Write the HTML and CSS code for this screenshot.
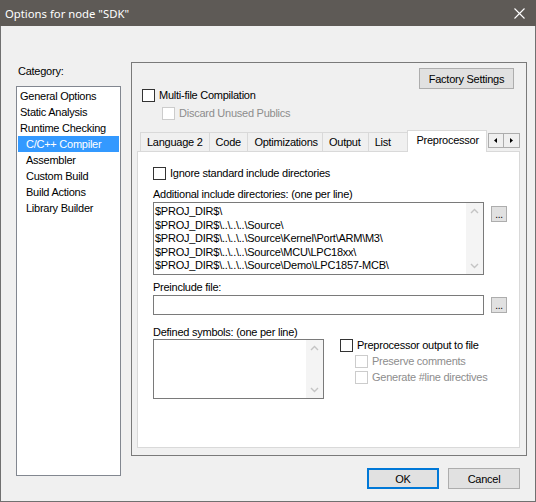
FILE: index.html
```html
<!DOCTYPE html>
<html lang="en">
<head>
    <meta charset="UTF-8">
    <title>Options for node "SDK"</title>
    <link rel="stylesheet" href="styles.css">
</head>
<body>
    <div class="window">
        <div class="titlebar">
            <span class="title">Options for node "SDK"</span>
            <svg class="close" width="11" height="11" viewBox="0 0 11 11"><path d="M0.5 0.5 L10.5 10.5 M10.5 0.5 L0.5 10.5" stroke="#fff" stroke-width="1.1" fill="none"/></svg>
        </div>
        <div class="client">
            <div class="left">
                <div class="cat-label">Category:</div>
                <ul class="catlist">
                    <li>General Options</li>
                    <li>Static Analysis</li>
                    <li>Runtime Checking</li>
                    <li class="sub selected">C/C++ Compiler</li>
                    <li class="sub">Assembler</li>
                    <li class="sub">Custom Build</li>
                    <li class="sub">Build Actions</li>
                    <li class="sub">Library Builder</li>
                </ul>
            </div>
            <div class="right">
                <div class="panel">
                    <div class="panel-top"><button class="btn factory">Factory Settings</button></div>
                    <div class="check multi"><span class="box"></span>Multi-file Compilation</div>
                    <div class="check disabled discard"><span class="box"></span>Discard Unused Publics</div>
                    <div class="tabstrip">
                        <div class="tab t-lang">Language 2</div>
                        <div class="tab t-code">Code</div>
                        <div class="tab t-opt">Optimizations</div>
                        <div class="tab t-out">Output</div>
                        <div class="tab t-list">List</div>
                        <div class="tab active">Preprocessor</div>
                        <div class="arrows">
                            <div class="arr"><svg width="14" height="13"><polygon points="8,4 5,6.5 8,9" fill="#000"/></svg></div>
                            <div class="arr"><svg width="14" height="13"><polygon points="6,4 9,6.5 6,9" fill="#000"/></svg></div>
                        </div>
                    </div>
                    <div class="page">
                        <div class="check"><span class="box"></span>Ignore standard include directories</div>

                        <div class="field-label">Additional include directories: (one per line)</div>
                        <div class="textrow">
                            <div class="textbox dirs">
                                <div class="lines">$PROJ_DIR$\
$PROJ_DIR$\..\..\..\Source\
$PROJ_DIR$\..\..\..\Source\Kernel\Port\ARM\M3\
$PROJ_DIR$\..\..\..\Source\MCU\LPC18xx\
$PROJ_DIR$\..\..\..\Source\Demo\LPC1857-MCB\</div>
                                <div class="vscroll">
                                    <svg width="17" height="17"><polyline points="5,10 8.5,6.5 12,10" fill="none" stroke="#c4c4c4" stroke-width="1.4"/></svg>
                                    <svg width="17" height="17"><polyline points="5,7 8.5,10.5 12,7" fill="none" stroke="#c4c4c4" stroke-width="1.4"/></svg>
                                </div>
                            </div>
                            <button class="btn browse">...</button>
                        </div>

                        <div class="field-label pre">Preinclude file:</div>
                        <div class="textrow">
                            <div class="textbox single"></div>
                            <button class="btn browse small">...</button>
                        </div>

                        <div class="defrow">
                            <div class="defcol">
                                <div class="field-label flat">Defined symbols: (one per line)</div>
                                <div class="textbox defs">
                                    <div class="lines"></div>
                                    <div class="vscroll">
                                        <svg width="17" height="17"><polyline points="5,10 8.5,6.5 12,10" fill="none" stroke="#c4c4c4" stroke-width="1.4"/></svg>
                                        <svg width="17" height="17"><polyline points="5,7 8.5,10.5 12,7" fill="none" stroke="#c4c4c4" stroke-width="1.4"/></svg>
                                    </div>
                                </div>
                            </div>
                            <div class="ppcol">
                                <div class="check"><span class="box"></span>Preprocessor output to file</div>
                                <div class="check disabled subcheck"><span class="box"></span>Preserve comments</div>
                                <div class="check disabled subcheck"><span class="box"></span>Generate #line directives</div>
                            </div>
                        </div>
                    </div>
                </div>
                <div class="actions">
                    <button class="btn default">OK</button>
                    <button class="btn">Cancel</button>
                </div>
            </div>
        </div>
    </div>
</body>
</html>
```

FILE: styles.css
```css
* {
    box-sizing: border-box;
}
body {
    margin: 0;
    font-family: "Liberation Sans", Arial, sans-serif;
    font-size: 11px;
    letter-spacing: -0.25px;
    color: #000;
    background: #f0f0f0;
}
.window {
    width: 536px;
    height: 502px;
    display: flex;
    flex-direction: column;
}
.titlebar {
    height: 26px;
    flex: none;
    background: #5e5a56;
    color: #fff;
    display: flex;
    align-items: center;
    justify-content: space-between;
    padding: 0 11px 0 5px;
    font-family: "Noto Sans", "Open Sans", sans-serif;
    font-size: 11.3px;
    letter-spacing: 0;
}
.client {
    flex: 1;
    border: 1px solid #707070;
    border-top: none;
    display: flex;
    align-items: flex-start;
    padding: 36px 8px 0 15px;
}

/* category list */
.left { width: 105px; }
.cat-label {
    height: 24px;
    padding: 3px 0 0 2px;
    line-height: 13px;
}
.catlist {
    height: 390px;
    margin: 0;
    padding: 1px 0 0;
    list-style: none;
    background: #fff;
    border: 1px solid #828790;
}
.catlist li {
    height: 16px;
    line-height: 16px;
    margin: 0 1px;
    padding-left: 2px;
}
.catlist li.sub { padding-left: 8px; }
.catlist li.selected { background: #3399ff; color: #fff; }

/* right side */
.right {
    width: 396px;
    margin-left: 10px;
}
.panel {
    height: 394px;
    border: 1px solid #7a7a7a;
    padding: 5px 6px 7px 5px;
    display: flex;
    flex-direction: column;
}
.panel-top {
    display: flex;
    justify-content: flex-end;
    padding-right: 6px;
}
.btn {
    font: inherit;
    letter-spacing: inherit;
    color: #000;
    background: #e1e1e1;
    border: 1px solid #adadad;
    padding: 0;
    height: 21px;
}
.factory { width: 95px; }

.check {
    display: flex;
    align-items: center;
    gap: 4px;
    height: 13px;
    line-height: 13px;
    white-space: nowrap;
}
.box {
    width: 13px;
    height: 13px;
    flex: none;
    border: 1px solid #333;
    background: #fff;
}
.check.disabled { color: #8d8d8d; }
.check.disabled .box { border-color: #cccccc; }
.multi { margin-left: 5px; }
.discard { margin-left: 25px; margin-top: 5px; }

/* tabs */
.tabstrip {
    margin-top: 10px;
    height: 21px;
    flex: none;
    display: flex;
    align-items: flex-end;
    padding-left: 3px;
    position: relative;
    z-index: 1;
}
.tab {
    height: 19px;
    line-height: 18px;
    padding-left: 6px;
    background: #f0f0f0;
    border: 1px solid #d9d9d9;
    border-bottom: none;
    border-right: none;
    white-space: nowrap;
}
.t-lang { width: 69px; }
.t-code { width: 39px; }
.t-opt { width: 75px; }
.t-out { width: 46px; }
.t-list { width: 42px; }
.tab.active {
    width: 80px;
    height: 22px;
    line-height: 19px;
    margin-left: -2px;
    margin-bottom: -1px;
    padding-left: 8px;
    background: #fff;
    border-right: 1px solid #d9d9d9;
}
.arrows {
    display: flex;
    align-self: flex-start;
    margin: 3px 0 0 1px;
}
.arr {
    width: 16px;
    height: 15px;
    border: 1px solid #adadad;
    background: #f0f0f0;
}
.arr + .arr { border-left: none; width: 16px; }
.arr svg { display: block; }

.page {
    flex: 1;
    background: #fff;
    border: 1px solid #d9d9d9;
    padding: 15px 0 0 15px;
}
.field-label {
    margin-top: 8px;
    margin-bottom: 1px;
    line-height: 13px;
    white-space: nowrap;
}
.field-label.pre { margin-top: 6px; }
.field-label.flat { margin: 0; }
.textrow {
    display: flex;
    align-items: flex-start;
}
.textbox {
    border: 1px solid #7a7a7a;
    background: #fff;
    display: flex;
}
.textbox.dirs { width: 331px; height: 73px; }
.textbox.single { width: 331px; height: 20px; }
.textbox.defs { width: 171px; height: 60px; }
.lines {
    flex: 1;
    padding: 2px 0 0 1px;
    line-height: 13.5px;
    white-space: pre;
    overflow: hidden;
}
.vscroll {
    width: 17px;
    background: #f4f4f4;
    display: flex;
    flex-direction: column;
    justify-content: space-between;
}
.vscroll svg { display: block; }
.browse {
    width: 16px;
    height: 16px;
    margin: 4px 0 0 7px;
    line-height: 16px;
    text-align: center;
    font-size: 10px;
}
.browse.small { margin-top: 2px; }

.defrow {
    display: flex;
    gap: 16px;
    margin-top: 11px;
}
.ppcol { padding-top: 13px; }
.subcheck { margin: 3px 0 0 15px; }

.actions {
    display: flex;
    justify-content: flex-end;
    gap: 9px;
    margin-top: 12px;
    padding-right: 7px;
}
.actions .btn { width: 72px; }
.btn.default { border: 2px solid #0078d7; }
```
